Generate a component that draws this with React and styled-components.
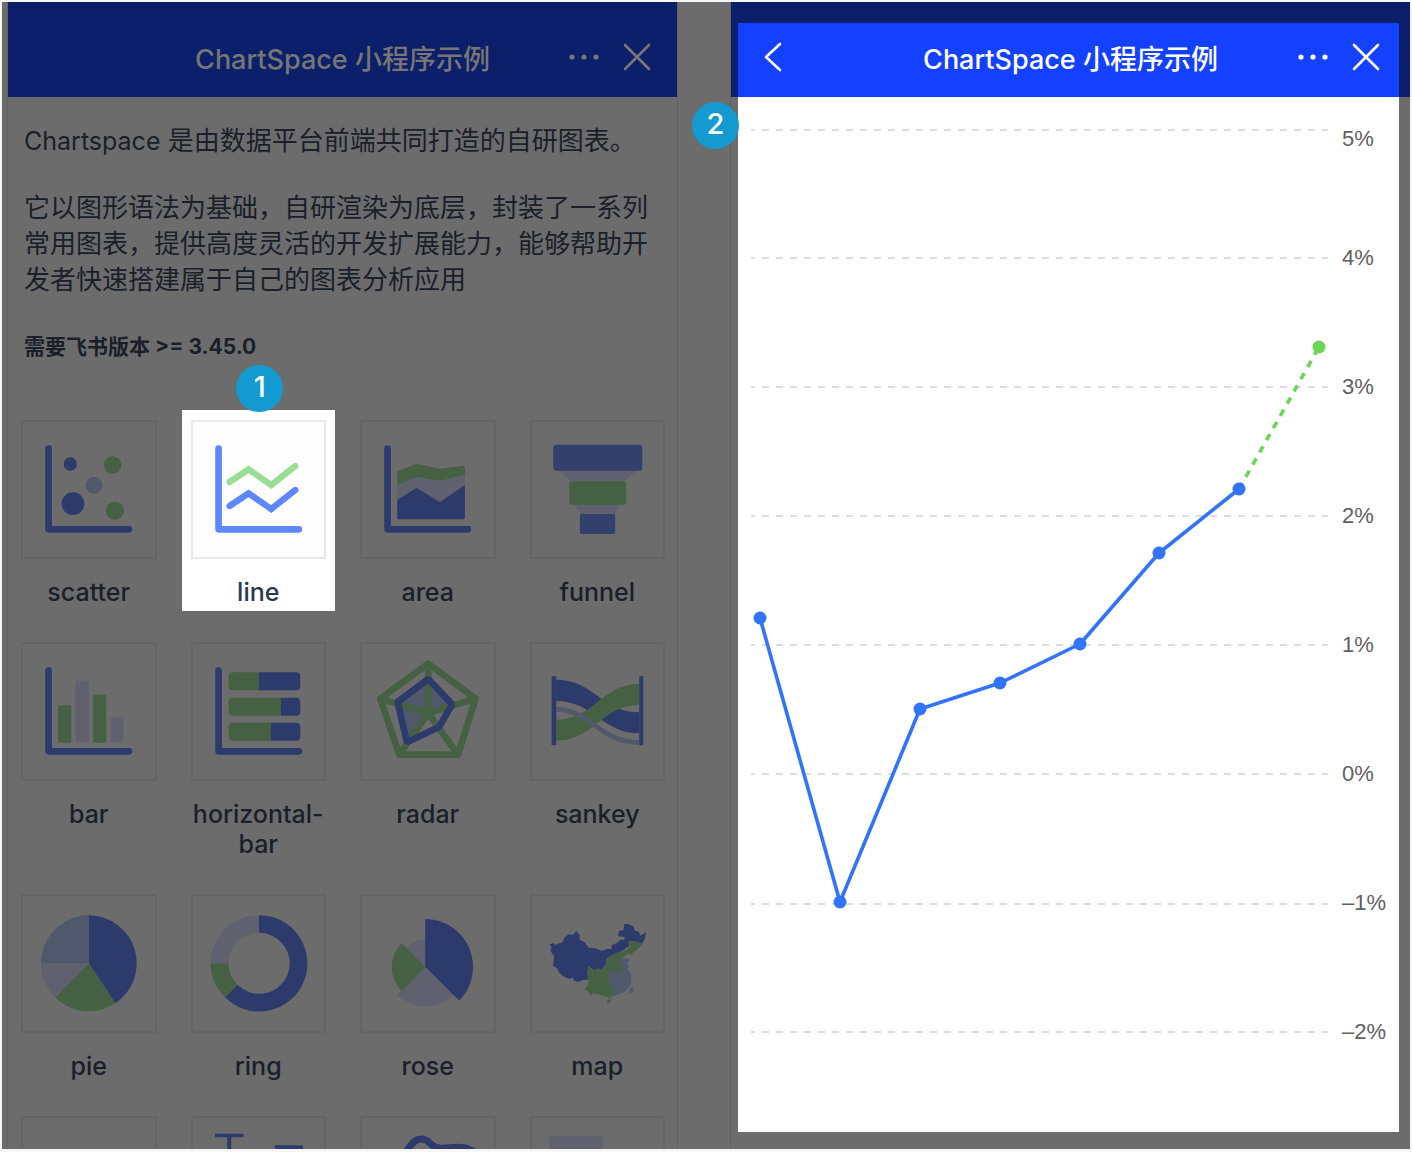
import styled, { createGlobalStyle, css } from "styled-components";

const BLUE = "#2d3a6c";
const GREEN = "#456042";
const MIST = "#5f616e";
const SLATE = "#50586c";

const GlobalStyle = createGlobalStyle`
    * {
        box-sizing: border-box;
    }
    body {
        margin: 0;
        background-color: #f6f6f6;
        font-family: Inter, "Noto Sans CJK SC", sans-serif;
    }
`;

const Page = styled.main`
    height: 100vh;
    padding: 2px 2px 3px;
`;

const Stage = styled.div`
    height: 100%;
    padding-left: 5px;
    background-color: #6c6c6c;
    display: grid;
    grid-template-columns: 671fr 680fr;
    grid-template-rows: minmax(0, 1fr);
    column-gap: 52px;
    overflow: hidden;
`;

const Phone = styled.section`
    min-width: 0;
    border: solid #626262;
    border-width: 0 1px;
    color: #1a1f2a;
`;

const DimmedPhone = styled.section`
    position: relative;
    min-width: 0;
    padding: 21px 11px 17px 7px;
    border-left: 1px solid #626262;
    background: linear-gradient(#0b1f6b 95px, transparent 95px);
`;

const Panel = styled.div`
    height: 100%;
    background-color: white;
    overflow: hidden;
`;

const Header = styled.header`
    height: ${props => props.$lit ? "74px" : "95px"};
    padding: ${props => props.$lit ? "0 18px 6px 22px" : "15px 25px 0"};
    background-color: ${props => props.$lit ? "#1440ff" : "#0b1f6b"};
    color: ${props => props.$lit ? "white" : "#777672"};
    display: grid;
    grid-template-columns: 1fr auto 1fr;
    align-items: center;
`;

const Title = styled.h1`
    grid-column: 2;
    margin: 0;
    padding-top: 5px;
    font-size: 27px;
    line-height: 36px;
    font-weight: 500;
    white-space: nowrap;
`;

const Actions = styled.div`
    grid-column: 3;
    justify-self: end;
    display: flex;
    align-items: center;
    gap: 22px;
`;

const IconButton = styled.button`
    padding: 0;
    border: 0;
    background: none;
    color: inherit;
    display: flex;
    justify-self: start;
    cursor: pointer;
`;

const Intro = styled.div`
    padding: 26px 16px 0;
`;

const Paragraph = styled.p`
    margin: 0 0 31px;
    font-size: 26px;
    line-height: 36px;
`;

const Brand = styled.span`
    font-size: 25px;
`;

const Version = styled.p`
    margin: 0;
    font-size: 21px;
    line-height: 36px;
    font-weight: 700;
`;

const Gallery = styled.nav`
    padding: 45px 3px 0 4px;
    display: grid;
    grid-template-columns: repeat(4, 1fr);
    gap: 21px 16px;
    align-items: start;
`;

const Item = styled.a`
    position: relative;
    padding: 10px 9px 4px;
    display: flex;
    flex-direction: column;
    gap: 18px;
    color: inherit;
    text-decoration: none;
    ${props => props.$lit && css`
        background-color: white;
        color: #2b3652;
    `}
`;

const Tile = styled.span`
    height: 139px;
    border: 2px solid ${props => props.$lit ? "#e9e9e9" : "#656565"};
    background-color: ${props => props.$lit ? "#fdfdfd" : "transparent"};
    display: flex;
    svg {
        width: 100%;
        height: 100%;
    }
`;

const Label = styled.span`
    font-size: 25px;
    line-height: 30px;
    font-weight: 500;
    text-align: center;
`;

const Badge = styled.span`
    position: absolute;
    width: 47px;
    height: 47px;
    border-radius: 50%;
    background-color: #129ad1;
    color: white;
    font-size: 29px;
    line-height: 44px;
    font-weight: 500;
    text-align: center;
`;

const ItemBadge = styled(Badge)`
    top: -45px;
    left: calc(50% - 22px);
`;

const PanelBadge = styled(Badge)`
    top: 100px;
    left: -39px;
`;

const Chart = styled.svg`
    width: 100%;
    display: block;
    font-family: "Liberation Sans", Arial, sans-serif;
    font-size: 22px;
`;

const Axis = ({ color = BLUE }) => (
    <path d="M82 86V328H323" fill="none" stroke={color} strokeWidth="20" strokeLinecap="round" strokeLinejoin="round" />
);

const icons = {
    scatter: <>
        <Axis />
        <circle cx="147" cy="132" r="20" fill={BLUE} />
        <circle cx="274" cy="135" r="26" fill={GREEN} />
        <circle cx="218" cy="196" r="25" fill={SLATE} />
        <circle cx="155" cy="251" r="34" fill={BLUE} />
        <circle cx="281" cy="272" r="27" fill={GREEN} />
    </>,
    line: <>
        <Axis color="#5e86ff" />
        <g fill="none" strokeWidth="19" strokeLinecap="round">
            <path d="M115 186L172 148L240 195L312 138" stroke="#9ade94" />
            <path d="M115 258L172 220L240 267L312 210" stroke="#5e86ff" />
        </g>
    </>,
    area: <>
        <Axis />
        <path d="M111 153L169 132L239 146L314 137V164L239 183L169 171L111 195Z" fill={GREEN} />
        <path d="M111 195L169 171L239 183L314 164V270H111Z" fill={MIST} />
        <path d="M111 240L169 203L239 247L314 195V293Q314 298 309 298H116Q111 298 111 293Z" fill={BLUE} />
    </>,
    funnel: <>
        <path d="M85 152H320L282 184H123ZM130 254H273L252 282H153Z" fill={MIST} />
        <rect x="69" y="74" width="267" height="78" rx="9" fill="#34406c" />
        <rect x="117" y="184" width="171" height="70" rx="9" fill={GREEN} />
        <rect x="149" y="282" width="106" height="60" rx="5" fill="#34406c" />
    </>,
    bar: <>
        <Axis />
        <rect x="111" y="190" width="39" height="112" rx="5" fill={GREEN} />
        <rect x="163" y="116" width="40" height="186" rx="5" fill={MIST} />
        <rect x="216" y="158" width="39" height="144" rx="5" fill={GREEN} />
        <rect x="268" y="226" width="39" height="76" rx="5" fill={MIST} />
    </>,
    "horizontal-bar": <>
        <Axis />
        {[[91, 203], [167, 269], [242, 239]].map(([y, split]) => (
            <g key={y}>
                <path d={`M${split} ${y}H124q-12 0 -12 12v30q0 12 12 12H${split}Z`} fill={GREEN} />
                <path d={`M${split} ${y}H315q12 0 12 12v30q0 12 -12 12H${split}Z`} fill={BLUE} />
            </g>
        ))}
    </>,
    radar: <>
        <path d="M204 111L276 187L204 213L140 301L112 180Z" fill={SLATE} />
        <path d="M204 65L346 170L293 338H117L60 170ZM204 213V65M204 213L346 170M204 213L293 338M204 213L117 338M204 213L60 170" fill="none" stroke={GREEN} strokeWidth="20" strokeLinejoin="round" />
        <path d="M204 111L276 187L236 255L140 301L112 180Z" fill="none" stroke={BLUE} strokeWidth="20" strokeLinejoin="bevel" />
    </>,
    sankey: <>
        <path d="M78 113C190 113 215 211 327 211V274C215 274 190 177 78 177Z" fill={BLUE} />
        <path d="M78 233C190 233 215 126 327 126V189C215 189 190 296 78 296Z" fill={GREEN} />
        <path d="M78 202C180 202 205 301 327 301" fill="none" stroke={SLATE} strokeWidth="14" />
        <path d="M64 103h14v207h-14ZM327 103h12v207h-12Z" fill={BLUE} />
    </>,
    pie: <>
        <path d="M203 208V64A144 144 0 0 1 282 328Z" fill={BLUE} />
        <path d="M203 208L283 327A144 144 0 0 1 101 310Z" fill={GREEN} />
        <path d="M203 208L101 310A144 144 0 0 1 59 208Z" fill={MIST} />
        <path d="M203 208H59A144 144 0 0 1 203 64Z" fill={SLATE} />
    </>,
    ring: <g fill="none" strokeWidth="53">
        <path d="M203 90A118 118 0 1 1 120 291" stroke={BLUE} />
        <path d="M120 291A118 118 0 0 1 85 208" stroke={GREEN} />
        <path d="M85 208A118 118 0 0 1 203 90" stroke={MIST} />
    </g>,
    rose: <>
        <path d="M195 219L137 161A82 82 0 0 1 195 137Z" fill={MIST} />
        <path d="M195 219L279 303A119 119 0 0 1 111 303Z" fill={MIST} />
        <path d="M195 219V75A144 144 0 0 1 297 320Z" fill={BLUE} />
        <path d="M195 219L124 291A102 102 0 0 1 124 147Z" fill={GREEN} />
    </>,
    map: <g transform="translate(-570 -41)" strokeLinejoin="round">
        <path d="M628 192L640 188L643 194L667 186L672 172L685 162L697 164L709 151L713 159L718 163L718 178L735 187L745 202L765 204L785 212L800 206L813 206L815 194L830 188L840 178L850 179L855 170L833 168L836 152L850 150L852 132L862 130L880 138L882 150L895 154L901 166L917 155L914 175L905 190L880 182L864 184L868 196L845 212L820 222L798 236L798 250L785 270L775 264L762 270L745 258L742 275L744 298L730 298L712 305L700 300L698 292L688 296L672 290L655 275L651 264L638 256L642 230L630 210L634 203Z" fill={BLUE} />
        <path d="M908 190L880 182L864 182L872 196L860 208L840 214L820 222L798 238L801 250L788 270L775 264L762 270L745 258L741 275L745 305L741 318L733 325L742 332L752 348L758 339L768 340L790 346L803 350L809 356L799 362L802 370L812 364L810 350L822 345L818 322L806 300L806 276L822 272L844 280L840 270L846 258L838 244L850 230L866 218L868 226L890 208Z" fill={GREEN} />
        <path d="M846 236L858 234L872 238L860 248L866 260L860 266L872 280L874 302L866 320L856 332L840 340L815 348L821 334L818 322L806 300L804 285L808 274L822 272L844 280L840 268L846 258L838 244ZM869 324L880 318L877 338L867 340Z" fill={SLATE} />
    </g>,
    box: <path d="M71 53h86v11h-37v180h-12v-180h-37ZM251 88h84v12h-84Z" fill={BLUE} />,
    curve: <path d="M134 116C160 62 190 58 214 86C235 105 265 93 298 94C322 94 340 105 356 118" fill="none" stroke={BLUE} strokeWidth="21" />,
    treemap: <rect x="57" y="60" width="160" height="120" fill={MIST} />,
};

const rows = ["scatter", "line", "area", "funnel", "bar", "horizontal-bar", "radar", "sankey", "pie", "ring", "rose", "map"];
// the fourth row is only partly in view
const more = ["combination", "box", "curve", "treemap"];

const ticks = [
    ["5%", 33, 49],
    ["4%", 161, 168],
    ["3%", 290, 297],
    ["2%", 419, 426],
    ["1%", 548, 555],
    ["0%", 677, 684],
    ["–1%", 807, 813],
    ["–2%", 935, 942],
];

const points = [[22, 521], [102, 805], [182, 612], [262, 586], [342, 547], [421, 456], [501, 392]];
const forecast = [581, 250];

function HeaderActions() {
    return (
        <Actions>
            <IconButton aria-label="more">
                <svg width="32" height="28" viewBox="0 0 32 28" fill="currentColor">
                    <circle cx="4" cy="14" r="2.6" />
                    <circle cx="16" cy="14" r="2.6" />
                    <circle cx="28" cy="14" r="2.6" />
                </svg>
            </IconButton>
            <IconButton aria-label="close">
                <svg width="30" height="30" viewBox="0 0 30 30" fill="none" stroke="currentColor" strokeWidth="2.6" strokeLinecap="round">
                    <path d="M3 3L27 27M27 3L3 27" />
                </svg>
            </IconButton>
        </Actions>
    );
}

function GalleryItem({ name, lit }) {
    return (
        <Item href={`#${name}`} $lit={lit}>
            {lit && <ItemBadge>1</ItemBadge>}
            <Tile $lit={lit}>
                <svg viewBox="6 6 393 405" aria-hidden="true">{icons[name]}</svg>
            </Tile>
            <Label>{name}</Label>
        </Item>
    );
}

function LineChart() {
    const last = points[points.length - 1];
    return (
        <Chart viewBox="0 0 661 1035" role="img" aria-label="line chart">
            {ticks.map(([text, y, baseline]) => (
                <g key={text}>
                    <path d={`M13 ${y}H590`} stroke="#d2d2d2" strokeWidth="1.6" strokeDasharray="7 7" strokeDashoffset="3" />
                    <text x="604" y={baseline} fill="#606060">{text}</text>
                </g>
            ))}
            <polyline points={points.join(" ")} fill="none" stroke="#3273fb" strokeWidth="3.6" strokeLinejoin="round" />
            <path d={`M${last}L${forecast}`} stroke="#6bd655" strokeWidth="3.6" strokeDasharray="7 7" />
            {points.map(([x, y]) => <circle key={x} cx={x} cy={y} r="6.5" fill="#3273fb" />)}
            <circle cx={forecast[0]} cy={forecast[1]} r="6.5" fill="#6bd655" />
        </Chart>
    );
}

export default function App() {
    return (
        <Page lang="zh-CN">
            <GlobalStyle />
            <Stage>
                <Phone>
                    <Header>
                        <Title>ChartSpace 小程序示例</Title>
                        <HeaderActions />
                    </Header>
                    <Intro>
                        <Paragraph><Brand>Chartspace</Brand> 是由数据平台前端共同打造的自研图表。</Paragraph>
                        <Paragraph>它以图形语法为基础，自研渲染为底层，封装了一系列常用图表，提供高度灵活的开发扩展能力，能够帮助开发者快速搭建属于自己的图表分析应用</Paragraph>
                        <Version>需要飞书版本 &gt;= 3.45.0</Version>
                    </Intro>
                    <Gallery>
                        {rows.map(name => <GalleryItem key={name} name={name} lit={name === "line"} />)}
                        {more.map(name => (
                            <Item key={name} href={`#${name}`} aria-label={name}>
                                <Tile>
                                    <svg viewBox="6 6 393 405" aria-hidden="true">{icons[name]}</svg>
                                </Tile>
                            </Item>
                        ))}
                    </Gallery>
                </Phone>
                <DimmedPhone>
                    <Panel>
                        <Header $lit>
                            <IconButton aria-label="back">
                                <svg width="26" height="32" viewBox="0 0 26 32" fill="none" stroke="currentColor" strokeWidth="2.6" strokeLinecap="round" strokeLinejoin="round">
                                    <path d="M20 3L6 16L20 29" />
                                </svg>
                            </IconButton>
                            <Title>ChartSpace 小程序示例</Title>
                            <HeaderActions />
                        </Header>
                        <LineChart />
                    </Panel>
                    <PanelBadge>2</PanelBadge>
                </DimmedPhone>
            </Stage>
        </Page>
    );
}
